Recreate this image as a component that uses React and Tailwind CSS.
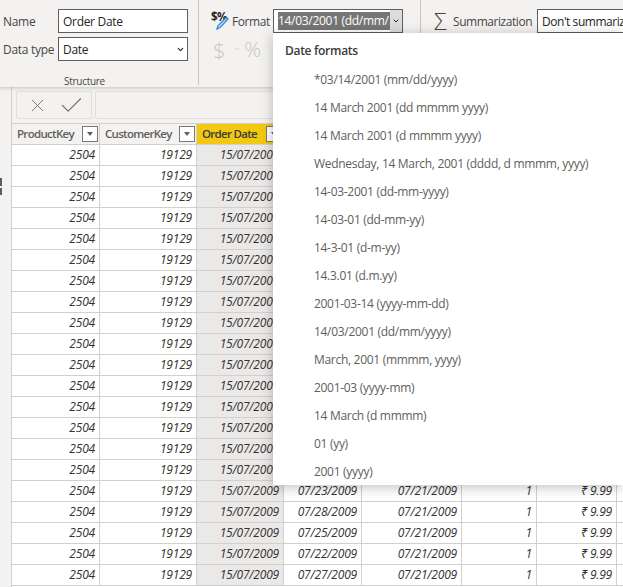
import { ChevronDown, X, Check } from "lucide-react";

const formats = [
  "*03/14/2001 (mm/dd/yyyy)",
  "14 March 2001 (dd mmmm yyyy)",
  "14 March 2001 (d mmmm yyyy)",
  "Wednesday, 14 March, 2001 (dddd, d mmmm, yyyy)",
  "14-03-2001 (dd-mm-yyyy)",
  "14-03-01 (dd-mm-yy)",
  "14-3-01 (d-m-yy)",
  "14.3.01 (d.m.yy)",
  "2001-03-14 (yyyy-mm-dd)",
  "14/03/2001 (dd/mm/yyyy)",
  "March, 2001 (mmmm, yyyy)",
  "2001-03 (yyyy-mm)",
  "14 March (d mmmm)",
  "01 (yy)",
  "2001 (yyyy)",
];

// rows under the dropdown only show their first three columns
const hiddenRows = 16;
const lastDates = ["07/23/2009", "07/28/2009", "07/25/2009", "07/22/2009", "07/27/2009"];
const rows = [...Array(hiddenRows).fill(null), ...lastDates];

const Cell = ({ width, shaded, children }) => (
  <div className={`${width} shrink-0 h-full border-r border-[#d2d0ce] flex items-center justify-end pr-[4px] ${shaded ? "bg-[#ebe9e8]" : ""}`}>
    {children}
  </div>
);

const HeadCell = ({ width, active, label }) => (
  <div className={`${width} shrink-0 h-full border-r border-[#d2d0ce] flex items-center justify-between pl-[5px] pr-[1px] font-semibold text-[11.5px] tracking-[-0.7px] ${active ? "bg-[#f2c811] text-[#3b3a39]" : "bg-[#f3f2f1] text-[#605e5c]"}`}>
    {label && <span className="whitespace-nowrap">{label}</span>}
    <div className="w-4 h-4 shrink-0 ml-auto bg-white border border-[#7a7876] flex items-center justify-center">
      <div className="w-0 h-0 border-x-[3.5px] border-x-transparent border-t-[4px] border-t-[#605e5c]" />
    </div>
  </div>
);

const FormatIcon = () => (
  <div className="relative w-[17px] h-[18px] shrink-0">
    <span className="absolute -top-[4px] left-0 text-[11.5px] font-bold text-[#252423] tracking-[-0.5px]">$%</span>
    <svg className="absolute left-[5px] top-[4px]" width="13" height="14" viewBox="0 0 13 14" fill="none">
      <path d="M10.5 1.5 L12 3 L4 11.5 L1 13 L2 9.8 Z" stroke="#2b88d8" strokeWidth="1.3" fill="#deecf9" />
    </svg>
  </div>
);

export default function App() {
  return (
    <div className="relative w-[623px] h-[587px] overflow-hidden bg-white text-[12px] text-[#252423] font-['Open_Sans','Noto_Sans',sans-serif] tracking-[-0.3px]">
      {/* ribbon */}
      <div className="relative z-10 h-[87px] bg-[#f3f2f1] shadow-[0_1px_4px_rgba(0,0,0,0.2)] flex">
        <div className="w-[199px] h-[85px] shrink-0 border-r border-[#c8c6c4] flex flex-col pt-[9px] pl-[3px]">
          <div className="flex items-center h-6">
            <span className="w-[55px] pt-px text-[#484644]">Name</span>
            <div className="w-[130px] h-6 bg-white border border-[#605e5c] flex items-center pt-px px-[4px]">Order Date</div>
          </div>
          <div className="flex items-center h-6 mt-1">
            <span className="w-[55px] pt-px text-[#484644]">Data type</span>
            <div className="w-[130px] h-6 bg-white border border-[#605e5c] flex items-center justify-between pt-px pl-[4px] pr-[2px]">
              Date
              <ChevronDown size={9} strokeWidth={3} />
            </div>
          </div>
          <div className="mt-auto mb-[-4px] w-[163px] text-center text-[10px] text-[#484644]">Structure</div>
        </div>
        <div className="w-[222px] h-[85px] shrink-0 border-r border-[#c8c6c4] flex flex-col pt-[9px] pl-[12px]">
          <div className="flex items-center h-6">
            <FormatIcon />
            <span className="ml-[4px] w-[41px] pt-px tracking-[-0.4px] text-[#484644]">Format</span>
            <div className="w-[130px] h-6 bg-white border border-[#605e5c] flex items-center pl-[4px]">
              <span className="w-[112px] h-[18px] bg-[#767676] text-white flex items-center overflow-hidden whitespace-nowrap">14/03/2001 (dd/mm/</span>
              <div className="w-[12px] h-[22px] bg-[#dcdcdc] flex items-center justify-center">
                <ChevronDown size={8} strokeWidth={3} />
              </div>
            </div>
          </div>
          <div className="flex items-center h-6 mt-1 text-[#c8c6c4]">
            <span className="text-[22px] font-light leading-none ml-[2px]">$</span>
            <ChevronDown size={8} className="ml-[8px]" />
            <span className="text-[21px] font-light leading-none ml-[3px] tracking-[-1px]">%</span>
          </div>
        </div>
        <div className="flex items-start pt-[9px] pl-[13px]">
          <div className="flex items-center h-6">
            <span className="text-[23px] font-light leading-none w-[18px] text-[#484644]">Σ</span>
            <span className="ml-[1px] w-[84px] pt-px tracking-[-0.45px] text-[#484644]">Summarization</span>
            <div className="w-[120px] h-6 bg-white border border-[#605e5c] flex items-center pt-px pl-[4px] tracking-[-0.45px] whitespace-nowrap overflow-hidden">Don't summarize</div>
          </div>
        </div>
      </div>

      <div className="flex h-[500px]">
        <div className="w-3 shrink-0 bg-[#f3f2f1] border-r border-[#d2d0ce] relative">
          <div className="absolute left-0 top-[91px] w-[2px] h-[8px] bg-[#605e5c]" />
          <div className="absolute left-0 top-[101px] w-[2px] h-[7px] bg-[#605e5c]" />
        </div>
        <div className="flex-1 min-w-0">
          <div className="h-[36px] bg-[#f3f2f1] flex gap-[3px] pt-[4px] pl-[4px]">
            <div className="w-[76px] h-[28px] border border-[#e1dfdd] rounded-[2px] flex items-center pl-[10px] gap-[10px] text-[#797775]">
              <X size={21} strokeWidth={1.1} />
              <Check size={27} strokeWidth={1.1} />
            </div>
            <div className="flex-1 h-[28px] border border-[#e1dfdd] rounded-[2px]" />
          </div>

          <div className="border-t border-[#d2d0ce]">
            <div className="h-[21px] flex border-b border-[#d2d0ce]">
              <HeadCell width="w-[88px]" label="ProductKey" />
              <HeadCell width="w-[97px]" label="CustomerKey" />
              <HeadCell width="w-[87px]" active label="Order Date" />
              <HeadCell width="w-[78px]" />
              <HeadCell width="w-[100px]" />
              <HeadCell width="w-[75px]" />
              <HeadCell width="w-[80px]" />
            </div>
            {rows.map((d, i) => (
              <div key={i} className="h-[21px] flex border-b border-[#d2d0ce] italic text-[#323130] tracking-[-0.2px]">
                <Cell width="w-[88px]">2504</Cell>
                <Cell width="w-[97px]">19129</Cell>
                <Cell width="w-[87px]" shaded>15/07/2009</Cell>
                <Cell width="w-[78px]">{d}</Cell>
                <Cell width="w-[100px]">{d && "07/21/2009"}</Cell>
                <Cell width="w-[75px]">{d && "1"}</Cell>
                <Cell width="w-[80px]">{d && "₹ 9.99"}</Cell>
              </div>
            ))}
          </div>
        </div>
      </div>

      {/* format dropdown */}
      <div className="absolute z-20 left-[273px] top-[33px] w-[350px] h-[452px] bg-white shadow-[0_2px_12px_rgba(0,0,0,0.25)]">
        <div className="h-[33px] pt-[2px] flex items-center pl-[12px] font-semibold text-[#3b3a39]">Date formats</div>
        {formats.map((f) => (
          <div key={f} className="h-7 flex items-center pl-[41px] text-[#605e5c] whitespace-nowrap">{f}</div>
        ))}
      </div>
    </div>
  );
}
